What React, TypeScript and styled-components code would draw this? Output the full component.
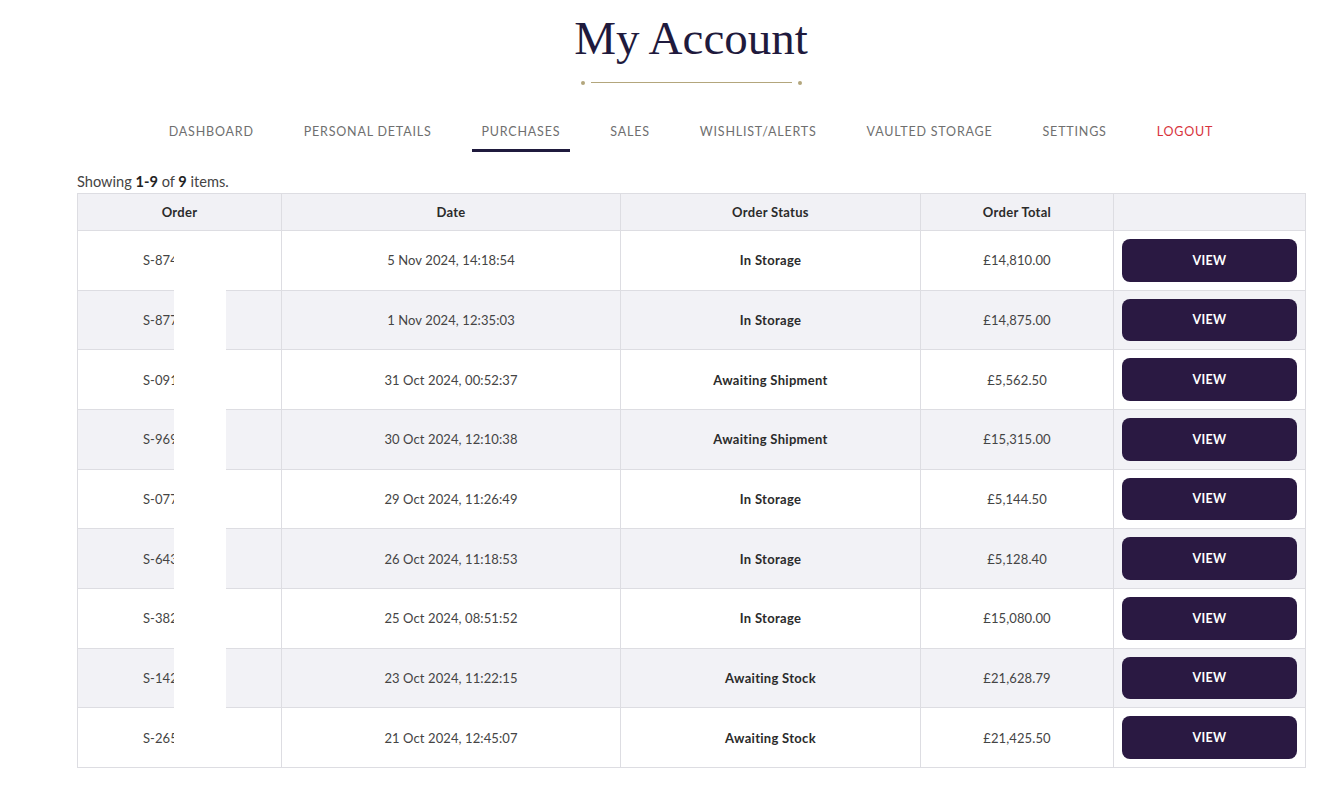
import React from "react"
import styled, { createGlobalStyle } from "styled-components"

const GlobalStyle = createGlobalStyle`
  html, body {
    margin: 0;
    padding: 0;
    background: #ffffff;
  }
  body {
    font-family: "Lato", "Open Sans", sans-serif;
    color: #333333;
  }
`

const Page = styled.div`
  padding: 10px 37px 40px 77px;
`

const Title = styled.h1`
  margin: 0;
  text-align: center;
  font-family: "Liberation Serif", "DejaVu Serif", serif;
  font-weight: 400;
  font-size: 47px;
  line-height: 56px;
  color: #1f1a3d;
`

const Divider = styled.div`
  display: flex;
  align-items: center;
  justify-content: center;
  gap: 6px;
  margin-top: 14px;
  height: 5px;
`

const Dot = styled.span`
  width: 4px;
  height: 4px;
  border-radius: 50%;
  background: #b3a67c;
`

const Rule = styled.span`
  width: 201px;
  height: 1px;
  background: #b3a67c;
`

const Nav = styled.nav`
  display: flex;
  justify-content: center;
  gap: 30px;
  margin-top: 29px;
`

const NavLink = styled.a<{ $active?: boolean; $danger?: boolean }>`
  display: block;
  padding: 10px 10px 9px;
  font-size: 12.5px;
  line-height: 16px;
  letter-spacing: 0.8px;
  text-transform: uppercase;
  text-decoration: none;
  color: ${(p) => (p.$danger ? "#d8333c" : "#6f6f6f")};
  border-bottom: 3px solid ${(p) => (p.$active ? "#1f1a3d" : "transparent")};
  cursor: pointer;
`

const Summary = styled.div`
  margin-top: 20px;
  font-size: 14.6px;
  line-height: 20px;
  color: #444;

  b {
    color: #222;
    font-weight: 700;
  }
`

const TableWrap = styled.div`
  position: relative;
  margin-top: 1px;
`

const Table = styled.table`
  width: 100%;
  border-collapse: collapse;
  table-layout: fixed;
  font-size: 13px;
`

const Th = styled.th`
  background: #f1f1f5;
  border: 1px solid #dddde2;
  padding: 10px 8px;
  line-height: 16px;
  font-weight: 700;
  letter-spacing: 0.3px;
  color: #2b2b2b;
  text-align: center;
`

const Row = styled.tr<{ $striped: boolean }>`
  background: ${(p) => (p.$striped ? "#f2f2f6" : "#ffffff")};
`

const Td = styled.td<{ $strong?: boolean }>`
  border: 1px solid #dddde2;
  padding: 8px;
  text-align: center;
  color: ${(p) => (p.$strong ? "#2b2b2b" : "#444444")};
  font-weight: ${(p) => (p.$strong ? 700 : 400)};
  letter-spacing: ${(p) => (p.$strong ? "0.3px" : "0.1px")};
`

const ViewButton = styled.button`
  display: block;
  width: 100%;
  height: 42.67px;
  border: 0;
  border-radius: 8px;
  background: #2a1942;
  color: #ffffff;
  font-family: inherit;
  font-size: 12.5px;
  font-weight: 700;
  letter-spacing: 0.3px;
  cursor: pointer;
`

// white mask laid over the order numbers
const Mask = styled.div`
  position: absolute;
  left: 97px;
  top: 38px;
  width: 52px;
  height: 535px;
  background: #ffffff;
`

const tabs = [
  "Dashboard",
  "Personal Details",
  "Purchases",
  "Sales",
  "Wishlist/Alerts",
  "Vaulted Storage",
  "Settings",
  "Logout",
]

const orders = [
  { id: "S-87421053", date: "5 Nov 2024, 14:18:54", status: "In Storage", total: "£14,810.00" },
  { id: "S-87731862", date: "1 Nov 2024, 12:35:03", status: "In Storage", total: "£14,875.00" },
  { id: "S-09152417", date: "31 Oct 2024, 00:52:37", status: "Awaiting Shipment", total: "£5,562.50" },
  { id: "S-96904388", date: "30 Oct 2024, 12:10:38", status: "Awaiting Shipment", total: "£15,315.00" },
  { id: "S-07728129", date: "29 Oct 2024, 11:26:49", status: "In Storage", total: "£5,144.50" },
  { id: "S-64390714", date: "26 Oct 2024, 11:18:53", status: "In Storage", total: "£5,128.40" },
  { id: "S-38261595", date: "25 Oct 2024, 08:51:52", status: "In Storage", total: "£15,080.00" },
  { id: "S-14278630", date: "23 Oct 2024, 11:22:15", status: "Awaiting Stock", total: "£21,628.79" },
  { id: "S-26543971", date: "21 Oct 2024, 12:45:07", status: "Awaiting Stock", total: "£21,425.50" },
]

export default function App() {
  return (
    <>
      <GlobalStyle />
      <Page>
        <Title>My Account</Title>
        <Divider>
          <Dot />
          <Rule />
          <Dot />
        </Divider>
        <Nav>
          {tabs.map((t) => (
            <NavLink key={t} $active={t === "Purchases"} $danger={t === "Logout"}>
              {t}
            </NavLink>
          ))}
        </Nav>
        <Summary>
          Showing <b>1-9</b> of <b>9</b> items.
        </Summary>
        <TableWrap>
          <Table>
            <colgroup>
              <col style={{ width: 204 }} />
              <col style={{ width: 339 }} />
              <col style={{ width: 300 }} />
              <col style={{ width: 193 }} />
              <col style={{ width: 192 }} />
            </colgroup>
            <thead>
              <tr>
                <Th>Order</Th>
                <Th>Date</Th>
                <Th>Order Status</Th>
                <Th>Order Total</Th>
                <Th />
              </tr>
            </thead>
            <tbody>
              {orders.map((o, i) => (
                <Row key={o.id} $striped={i % 2 === 1}>
                  <Td>{o.id}</Td>
                  <Td>{o.date}</Td>
                  <Td $strong>{o.status}</Td>
                  <Td>{o.total}</Td>
                  <Td>
                    <ViewButton>VIEW</ViewButton>
                  </Td>
                </Row>
              ))}
            </tbody>
          </Table>
          <Mask />
        </TableWrap>
      </Page>
    </>
  )
}
